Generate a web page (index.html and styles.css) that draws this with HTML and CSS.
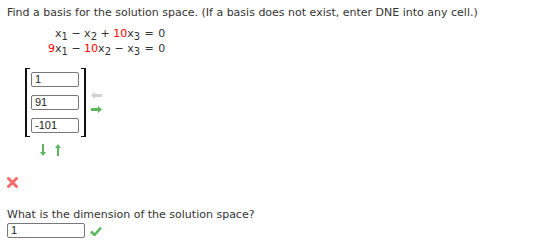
FILE: index.html
```html
<!DOCTYPE html>
<html>
<head>
<meta charset="utf-8">
<link rel="stylesheet" href="styles.css">
</head>
<body>
<div class="page">
  <p class="q">Find a basis for the solution space. (If a basis does not exist, enter DNE into any cell.)</p>
  <div class="eqs">
    <div class="eq">x<sub>1</sub> − x<sub>2</sub> + <span class="r">10</span>x<sub>3</sub> <span class="eqs-op">=</span> 0</div>
    <div class="eq"><span class="r">9</span>x<sub>1</sub> − <span class="r">10</span>x<sub>2</sub> − x<sub>3</sub> <span class="eqs-op">=</span> 0</div>
  </div>
  <div class="mrow">
    <div class="matrix">
      <div class="cell">1</div>
      <div class="cell">91</div>
      <div class="cell">-101</div>
    </div>
    <div class="harrows">
      <svg class="ha" width="11" height="7" viewBox="0 0 11 7"><path d="M0 3.5 L4 0 L4 2 L11 2 L11 5 L4 5 L4 7 Z" fill="#d0d0d0"/></svg>
      <svg class="ha green" width="11" height="7" viewBox="0 0 11 7"><path d="M11 3.5 L7 0 L7 2 L0 2 L0 5 L7 5 L7 7 Z" fill="#5cb85c"/></svg>
    </div>
  </div>
  <div class="varrows">
    <svg width="6" height="12" viewBox="0 0 6 12"><path d="M3 12 L0 8 L2 8 L2 0 L4 0 L4 8 L6 8 Z" fill="#5cb85c"/></svg>
    <svg width="6" height="12" viewBox="0 0 6 12"><path d="M3 0 L0 4 L2 4 L2 12 L4 12 L4 4 L6 4 Z" fill="#5cb85c"/></svg>
  </div>
  <svg class="xmark" width="11" height="11" viewBox="0 0 11 11"><path d="M1.5 1.5 L9.5 9.5 M9.5 1.5 L1.5 9.5" stroke="#f56a6a" stroke-width="3" stroke-linecap="round"/></svg>
  <p class="q2">What is the dimension of the solution space?</p>
  <div class="ans">
    <div class="inp">1</div>
    <svg class="check" width="12" height="10" viewBox="0 0 12 10"><path d="M1 5.5 L4.5 9 L11 1.5" stroke="#5cb85c" stroke-width="2.6" fill="none" stroke-linejoin="round"/></svg>
  </div>
</div>
</body>
</html>
```

FILE: styles.css
```css
html, body {
  margin: 0;
  padding: 0;
  background: #fff;
}
body {
  font-family: "DejaVu Sans", Verdana, sans-serif;
  font-size: 11px;
  color: #333;
}
.page {
  padding: 6px 7px 0 7px;
}
.q {
  margin: 0;
  line-height: 14px;
  height: 14px;
}
.eqs {
  margin: 6px 0 0 41px;
  display: inline-block;
  text-align: right;
}
.eq {
  line-height: 15px;
  height: 15px;
  white-space: nowrap;
}
.eqs-op {
  margin: 0 1px;
}
.eq sub {
  font-size: 10px;
  vertical-align: -3px;
  line-height: 0;
}
.r {
  color: #f00;
}
.mrow {
  display: flex;
  align-items: flex-start;
  margin: 12px 0 0 18px;
}
.matrix {
  display: flex;
  flex-direction: column;
  gap: 8px;
  padding: 4px 5px 4px 4px;
  border-left: 2px solid #111;
  border-right: 2px solid #111;
  position: relative;
}
.matrix::before, .matrix::after {
  content: "";
  position: absolute;
  top: 0;
  bottom: 0;
  width: 3px;
  border-top: 1px solid #111;
  border-bottom: 1px solid #111;
}
.matrix::before { left: 0; }
.matrix::after { right: 0; }
.cell {
  width: 43px;
  height: 13px;
  border: 1px solid #777;
  border-radius: 2px;
  padding: 0 0 0 3px;
  line-height: 13px;
  font-family: "Liberation Sans", Arial, sans-serif;
  font-size: 11px;
  color: #222;
}
.harrows {
  display: flex;
  flex-direction: column;
  margin: 24px 0 0 5px;
  gap: 7px;
}
.ha { display: block; }
.varrows {
  display: flex;
  gap: 9px;
  margin: 7px 0 0 33px;
}
.varrows svg { display: block; }
.xmark {
  display: block;
  margin: 21px 0 0 0;
}
.q2 {
  margin: 20px 0 0 0;
  line-height: 14px;
  height: 14px;
}
.ans {
  display: flex;
  align-items: center;
  gap: 5px;
  margin-top: 1px;
}
.inp {
  width: 73px;
  height: 13px;
  border: 1px solid #777;
  border-radius: 2px;
  padding-left: 3px;
  line-height: 13px;
  font-family: "Liberation Sans", Arial, sans-serif;
  font-size: 11px;
  color: #222;
}
.check { display: block; }
```
